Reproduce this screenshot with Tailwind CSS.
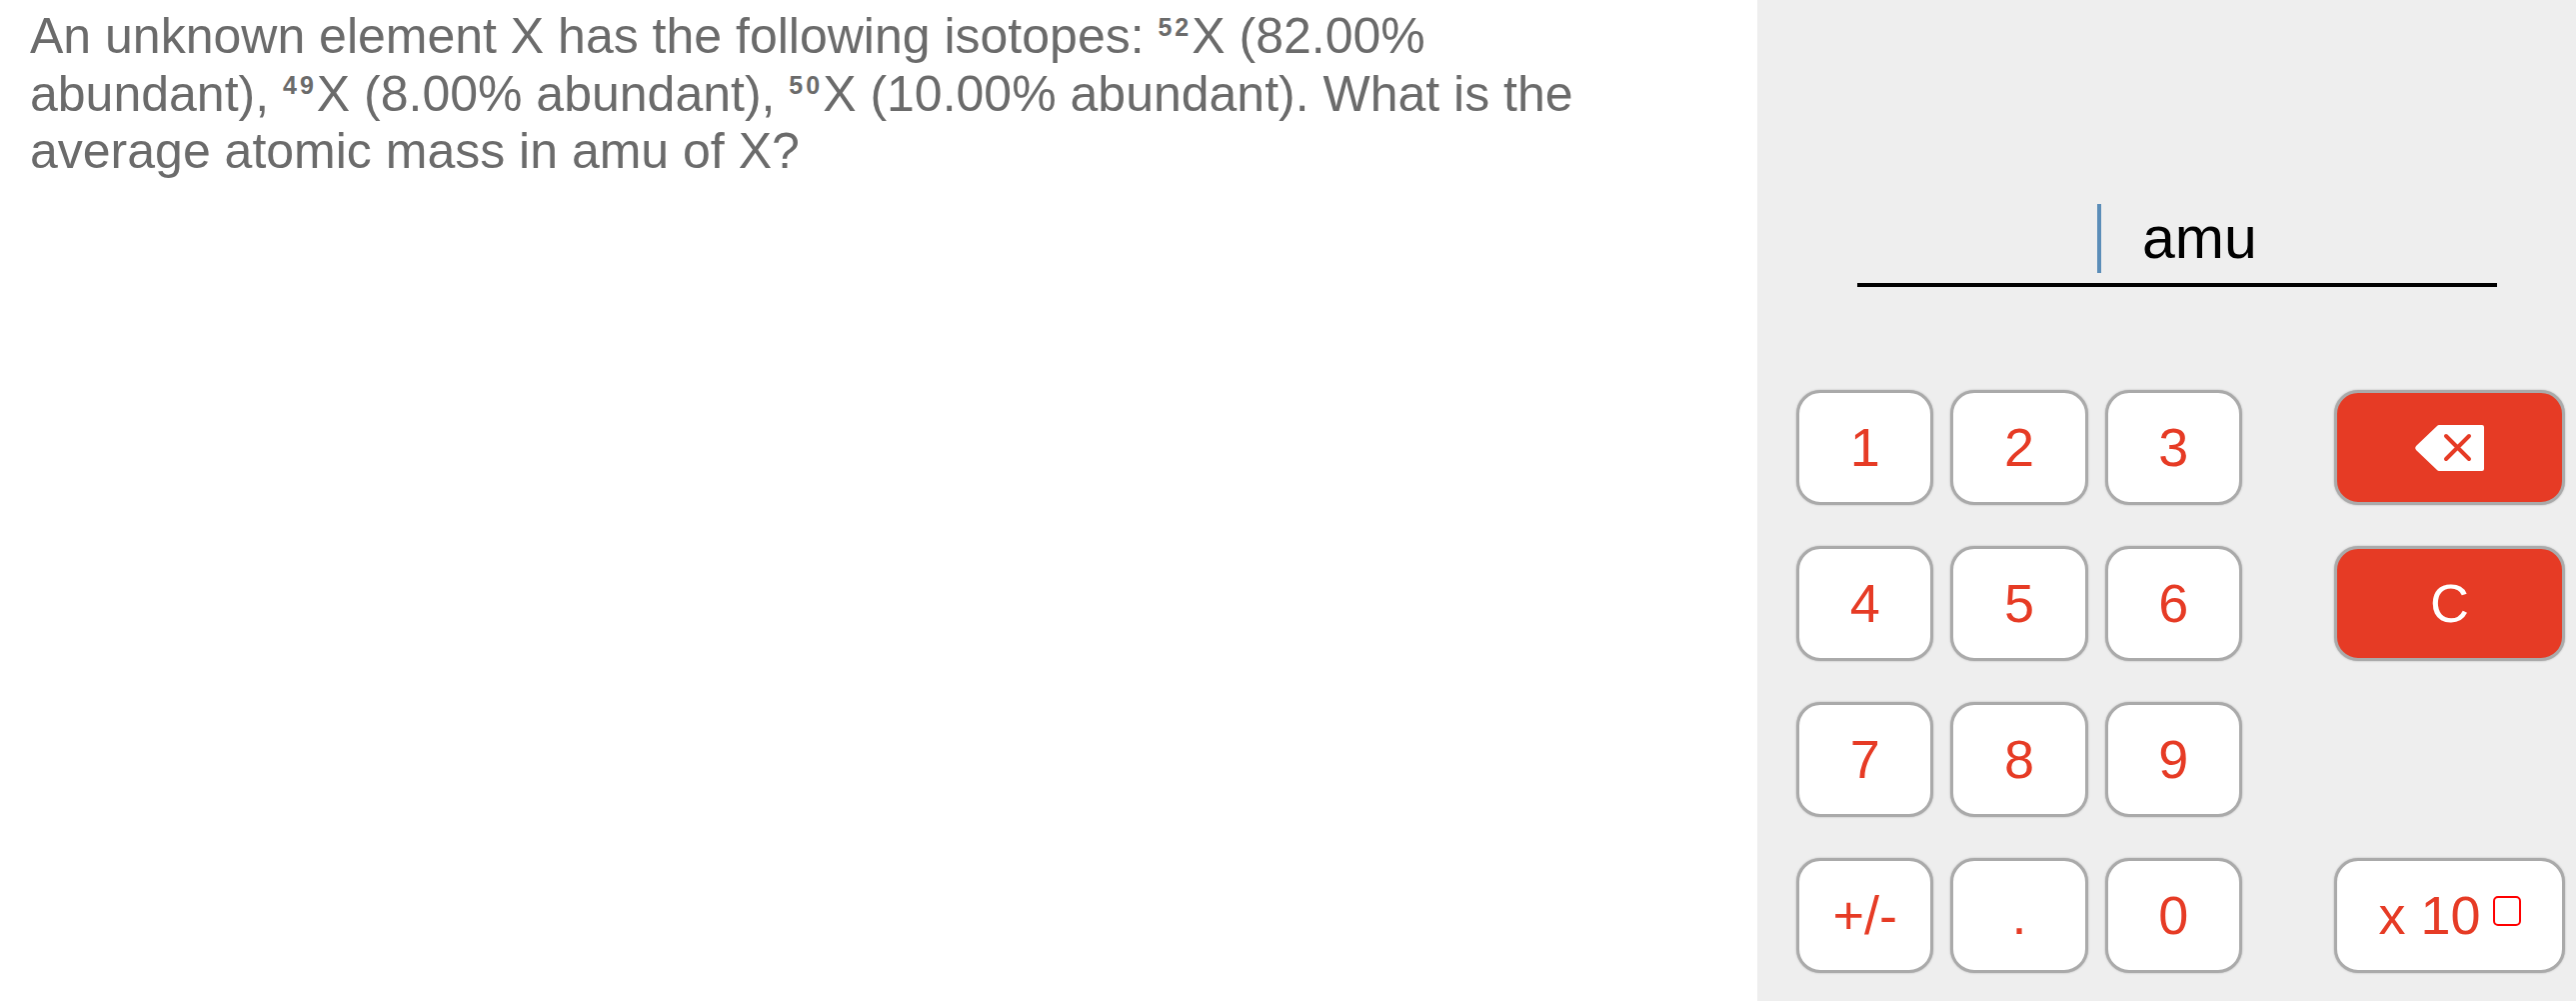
<!DOCTYPE html>
<html lang="en">
<head>
    <meta charset="UTF-8">
    <title>Average atomic mass</title>
    <script src="https://cdn.jsdelivr.net/npm/@tailwindcss/browser@4"></script>
</head>
<body class="bg-white font-['Liberation_Sans',Arial,sans-serif]">
    <div class="flex h-[1001px] w-[2577px] overflow-hidden">
        <!-- Question -->
        <div class="flex-1 pl-[30px] pt-[8px]">
            <p class="w-[1600px] text-[50px] leading-[57.6px] text-[#6b6b6b]">An unknown element X has the following isotopes: <span class="align-[17px] text-[25px] font-bold leading-none tracking-[3px]">52</span>X (82.00% abundant), <span class="align-[17px] text-[25px] font-bold leading-none tracking-[3px]">49</span>X (8.00% abundant), <span class="align-[17px] text-[25px] font-bold leading-none tracking-[3px]">50</span>X (10.00% abundant). What is the average atomic mass in amu of X?</p>
        </div>

        <!-- Answer panel -->
        <div class="w-[819px] bg-[#eeeeee] pl-[39px]">
            <div class="ml-[61px] mt-[204px] flex h-[83px] w-[640px] items-start border-b-4 border-black pl-[240px]">
                <span class="h-[69px] w-1 bg-[#5b8db8]"></span>
                <span class="ml-[41px] text-[59px] leading-[69px] text-black">amu</span>
            </div>

            <!-- Keypad -->
            <div class="mt-[103px] flex">
                <div class="grid w-[446px] grid-cols-3 gap-x-[17px] gap-y-[41px] text-[54px] text-[#e63b25]">
                    <button class="h-[115px] rounded-[24px] border-[3px] border-[#aaaaaa] bg-white shadow-[0_0_2px_#aaaaaa]">1</button>
                    <button class="h-[115px] rounded-[24px] border-[3px] border-[#aaaaaa] bg-white shadow-[0_0_2px_#aaaaaa]">2</button>
                    <button class="h-[115px] rounded-[24px] border-[3px] border-[#aaaaaa] bg-white shadow-[0_0_2px_#aaaaaa]">3</button>
                    <button class="h-[115px] rounded-[24px] border-[3px] border-[#aaaaaa] bg-white shadow-[0_0_2px_#aaaaaa]">4</button>
                    <button class="h-[115px] rounded-[24px] border-[3px] border-[#aaaaaa] bg-white shadow-[0_0_2px_#aaaaaa]">5</button>
                    <button class="h-[115px] rounded-[24px] border-[3px] border-[#aaaaaa] bg-white shadow-[0_0_2px_#aaaaaa]">6</button>
                    <button class="h-[115px] rounded-[24px] border-[3px] border-[#aaaaaa] bg-white shadow-[0_0_2px_#aaaaaa]">7</button>
                    <button class="h-[115px] rounded-[24px] border-[3px] border-[#aaaaaa] bg-white shadow-[0_0_2px_#aaaaaa]">8</button>
                    <button class="h-[115px] rounded-[24px] border-[3px] border-[#aaaaaa] bg-white shadow-[0_0_2px_#aaaaaa]">9</button>
                    <button class="h-[115px] rounded-[24px] border-[3px] border-[#aaaaaa] bg-white shadow-[0_0_2px_#aaaaaa]">+/-</button>
                    <button class="h-[115px] rounded-[24px] border-[3px] border-[#aaaaaa] bg-white shadow-[0_0_2px_#aaaaaa]">.</button>
                    <button class="h-[115px] rounded-[24px] border-[3px] border-[#aaaaaa] bg-white shadow-[0_0_2px_#aaaaaa]">0</button>
                </div>
                <div class="ml-[92px] flex w-[231px] flex-col gap-y-[41px] text-[54px]">
                    <button class="flex h-[115px] items-center justify-center rounded-[24px] border-[3px] border-[#aaaaaa] bg-[#e63b25] shadow-[0_0_2px_#aaaaaa]">
                        <svg width="72" height="48" viewBox="0 0 72 48">
                            <path d="M25 1 H68 a2 2 0 0 1 2 2 V45 a2 2 0 0 1 -2 2 H25 a3 3 0 0 1 -2 -1 L2 26 a3 3 0 0 1 0 -4 L23 2 a3 3 0 0 1 2 -1 Z" fill="#ffffff"/>
                            <path d="M32 12 L55 35 M55 12 L32 35" stroke="#e63b25" stroke-width="4" stroke-linecap="round"/>
                        </svg>
                    </button>
                    <button class="h-[115px] rounded-[24px] border-[3px] border-[#aaaaaa] bg-[#e63b25] text-white shadow-[0_0_2px_#aaaaaa]">C</button>
                    <div class="h-[115px]"></div>
                    <button class="flex h-[115px] items-center justify-center rounded-[24px] border-[3px] border-[#aaaaaa] bg-white text-[#e63b25] shadow-[0_0_2px_#aaaaaa]">
                        <span>x 10</span>
                        <span class="mb-[9px] ml-[12px] h-[30px] w-[28px] rounded-[5px] border-2 border-[#ff0000]"></span>
                    </button>
                </div>
            </div>
        </div>
    </div>
</body>
</html>
